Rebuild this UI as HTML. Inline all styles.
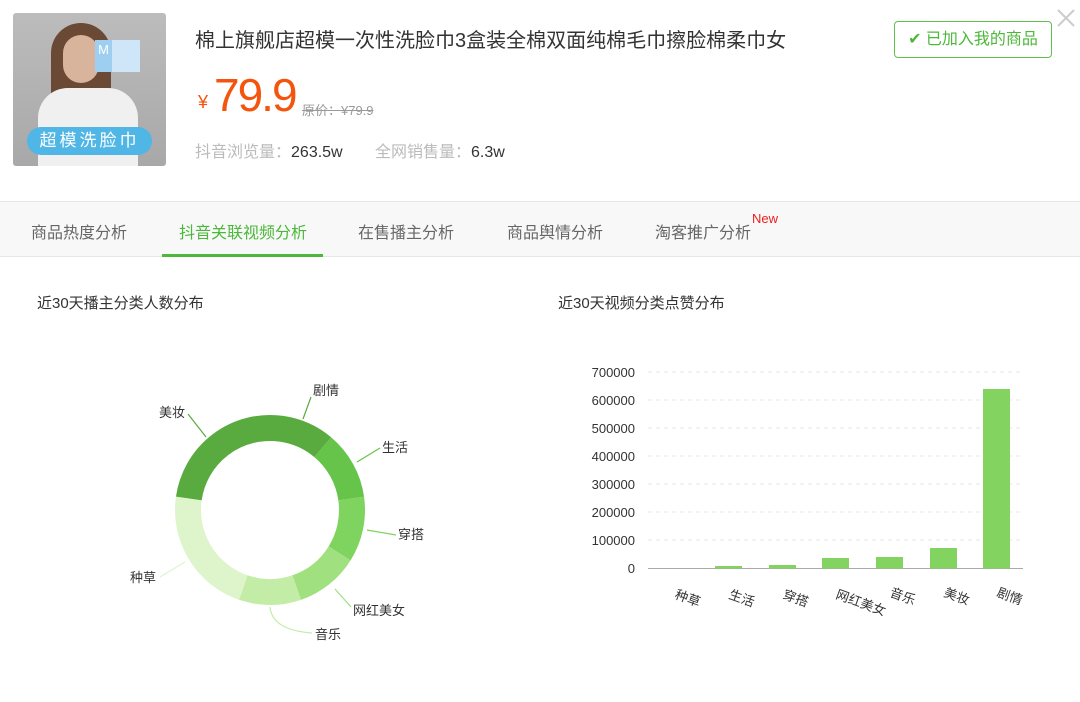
<!DOCTYPE html>
<html><head><meta charset="utf-8"><style>
*{margin:0;padding:0;box-sizing:border-box}
body{width:1080px;height:702px;background:#fff;font-family:"Liberation Sans","Noto Sans CJK SC",sans-serif;position:relative;overflow:hidden;color:#333}
.abs{position:absolute;white-space:nowrap}
</style></head><body>
<div class="abs" style="left:13px;top:13px;width:153px;height:153px;border-radius:3px;overflow:hidden;background:linear-gradient(180deg,#bdbcbd,#a9a8a9)">
  <div class="abs" style="left:38px;top:10px;width:60px;height:90px;border-radius:30px 30px 10px 10px;background:#6b4a35"></div>
  <div class="abs" style="left:50px;top:22px;width:36px;height:48px;border-radius:18px;background:#d9b49c"></div>
  <div class="abs" style="left:25px;top:75px;width:100px;height:90px;border-radius:30px 30px 0 0;background:#f1f0f0"></div>
  <div class="abs" style="left:82px;top:27px;width:45px;height:32px;background:#cfe6f8"></div>
  <div class="abs" style="left:82px;top:27px;width:17px;height:32px;background:#9ecff1;color:#fff;font-size:13px;text-align:center;line-height:20px">M</div>
  <div class="abs" style="left:14px;top:114px;width:125px;height:28px;border-radius:14px;background:#4fb6e6;color:#fff;font-size:17px;text-align:center;line-height:28px;letter-spacing:3px">超模洗脸巾</div>
</div>
<div class="abs" style="left:195px;top:24px;font-size:20px;color:#333">棉上旗舰店超模一次性洗脸巾3盒装全棉双面纯棉毛巾擦脸棉柔巾女</div>
<div class="abs" style="left:198px;top:92px;font-size:18px;color:#f4550e">¥</div>
<div class="abs" style="left:214px;top:68px;font-size:46px;color:#f4550e;letter-spacing:-2px">79.9</div>
<div class="abs" style="left:302px;top:100px;font-size:13px;color:#999;text-decoration:line-through">原价：¥79.9</div>
<div class="abs" style="left:195px;top:138px;font-size:16px;color:#bbb">抖音浏览量：<span style="color:#333">263.5w</span></div>
<div class="abs" style="left:375px;top:138px;font-size:16px;color:#bbb">全网销售量：<span style="color:#333">6.3w</span></div>
<div class="abs" style="left:894px;top:21px;width:158px;height:37px;border:1px solid #5ec24a;border-radius:4px;color:#4cb83a;font-size:16px;line-height:35px;text-align:center">✔ 已加入我的商品</div>
<svg class="abs" style="left:1056px;top:8px" width="20" height="20"><path d="M2 2L18 18M18 2L2 18" stroke="#ccc" stroke-width="2"/></svg>
<div class="abs" style="left:0;top:201px;width:1080px;height:56px;background:#f8f8f8;border-top:1px solid #e6e6e6;border-bottom:1px solid #e6e6e6"></div>
<div class="abs" style="left:31px;top:219px;font-size:16px;color:#666">商品热度分析</div>
<div class="abs" style="left:179px;top:219px;font-size:16px;color:#4cb83a">抖音关联视频分析</div>
<div class="abs" style="left:162px;top:254px;width:161px;height:3px;background:#4cb83a"></div>
<div class="abs" style="left:358px;top:219px;font-size:16px;color:#666">在售播主分析</div>
<div class="abs" style="left:507px;top:219px;font-size:16px;color:#666">商品舆情分析</div>
<div class="abs" style="left:655px;top:219px;font-size:16px;color:#666">淘客推广分析</div>
<div class="abs" style="left:752px;top:211px;font-size:13px;color:#f01c1c">New</div>
<div class="abs" style="left:37px;top:292px;font-size:15px;color:#333">近30天播主分类人数分布</div>
<div class="abs" style="left:558px;top:292px;font-size:15px;color:#333">近30天视频分类点赞分布</div>
<svg class="abs" style="left:0;top:0" width="1080" height="702" font-family="Liberation Sans,Noto Sans CJK SC,sans-serif">
 <g fill="none" stroke-width="26">
  <circle cx="270" cy="510" r="82" stroke="#5aab3f" stroke-dasharray="174.6 600" transform="rotate(188 270 510)"/>
  <circle cx="270" cy="510" r="82" stroke="#67c44a" stroke-dasharray="60.1 600" transform="rotate(310 270 510)"/>
  <circle cx="270" cy="510" r="82" stroke="#7fd35f" stroke-dasharray="57.2 600" transform="rotate(352 270 510)"/>
  <circle cx="270" cy="510" r="82" stroke="#a0e07f" stroke-dasharray="55.8 600" transform="rotate(32 270 510)"/>
  <circle cx="270" cy="510" r="82" stroke="#c3eca6" stroke-dasharray="54.4 600" transform="rotate(71 270 510)"/>
  <circle cx="270" cy="510" r="82" stroke="#def5cc" stroke-dasharray="113.1 600" transform="rotate(109 270 510)"/>
 </g>
 <g fill="none" stroke-width="1.2">
  <path d="M303 419L311 397" stroke="#5aab3f"/>
  <path d="M206 437L188 414" stroke="#5aab3f"/>
  <path d="M357 462L380 448" stroke="#67c44a"/>
  <path d="M367 530L396 535" stroke="#7fd35f"/>
  <path d="M335 589L351 607" stroke="#a0e07f"/>
  <path d="M270 607Q272 630 312 633" stroke="#c3eca6"/>
  <path d="M185 562L160 577" stroke="#def5cc"/>
 </g>
 <g font-size="13" fill="#333">
  <text x="313" y="395">剧情</text><text x="159" y="417">美妆</text><text x="382" y="452">生活</text>
  <text x="398" y="539">穿搭</text><text x="353" y="615">网红美女</text><text x="315" y="639">音乐</text><text x="130" y="582">种草</text>
 </g>
 <g stroke="#e4e4e4" stroke-dasharray="4 4">
  <path d="M648 372H1023M648 400H1023M648 428H1023M648 456H1023M648 484H1023M648 512H1023M648 540H1023"/>
 </g>
 <path d="M648 568.5H1023" stroke="#aaa"/>
 <g font-size="13" fill="#333" text-anchor="end">
  <text x="635" y="377">700000</text><text x="635" y="405">600000</text><text x="635" y="433">500000</text><text x="635" y="461">400000</text><text x="635" y="489">300000</text><text x="635" y="517">200000</text><text x="635" y="545">100000</text><text x="635" y="573">0</text>
 </g>
 <g fill="#83d360">
  <rect x="715" y="566" width="27" height="2.5"/><rect x="769" y="565" width="27" height="3.5"/>
  <rect x="822" y="558" width="27" height="10.5"/><rect x="876" y="557" width="27" height="11.5"/>
  <rect x="930" y="548" width="27" height="20.5"/><rect x="983" y="389" width="27" height="179.5"/>
 </g>
 <g font-size="13" fill="#333">
  <text transform="translate(674 598) rotate(20)">种草</text>
  <text transform="translate(728 598) rotate(20)">生活</text>
  <text transform="translate(782 598) rotate(20)">穿搭</text>
  <text transform="translate(835 598) rotate(20)">网红美女</text>
  <text transform="translate(889 596) rotate(20)">音乐</text>
  <text transform="translate(943 596) rotate(20)">美妆</text>
  <text transform="translate(996 596) rotate(20)">剧情</text>
 </g>
</svg>
</body></html>
